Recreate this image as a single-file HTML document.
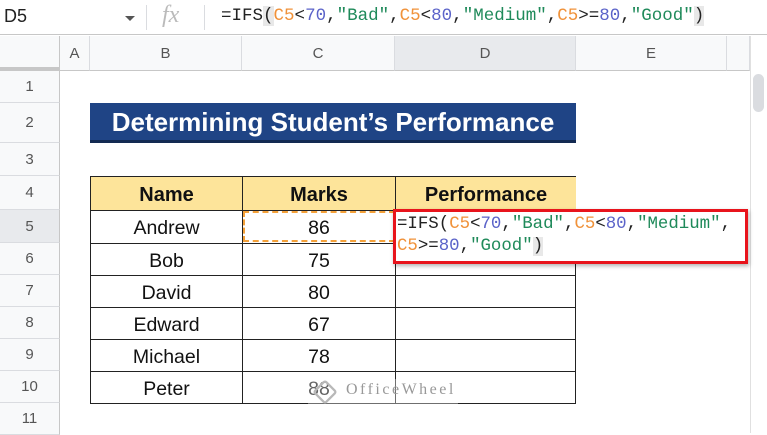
<!DOCTYPE html>
<html><head><style>
*{margin:0;padding:0;box-sizing:border-box}
body{width:767px;height:433px;overflow:hidden;background:#fff;font-family:"Liberation Sans",Arial,sans-serif;position:relative}
.a{position:absolute}
.mono{font-family:"Liberation Mono",monospace}
.r{color:#f0923a}.n{color:#5b63c9}.s{color:#1f8a5a}
.rh{position:absolute;left:0;width:60px;background:#f8f9fa;border-bottom:1px solid #dadce0;border-right:1px solid #c7c7c7;color:#555;font-size:15px;text-align:center}
.ch{position:absolute;top:36px;height:35px;background:#f8f9fa;border-right:1px solid #dadce0;border-bottom:1px solid #c7c7c7;color:#555;font-size:15px;text-align:center;line-height:35px}
.c{position:absolute;border-left:1.5px solid #222;border-top:1.5px solid #222;text-align:center;font-size:19.5px;color:#111}
</style></head><body>
<div class="a" style="left:0;top:0;width:767px;height:35px;border-bottom:1px solid #c7c7c7;background:#fff"></div>
<div class="a" style="left:4px;top:6px;font-size:18px;color:#222">D5</div>
<div class="a" style="left:125px;top:16px;width:0;height:0;border-left:5px solid transparent;border-right:5px solid transparent;border-top:5px solid #555"></div>
<div class="a" style="left:146px;top:5px;width:1px;height:25px;background:#dadce0"></div>
<div class="a" style="left:162px;top:2px;font-size:24px;font-style:italic;color:#bbb;font-family:'Liberation Serif',serif">fx</div>
<div class="a" style="left:204px;top:5px;width:1px;height:25px;background:#dadce0"></div>
<div class="a mono" style="left:221px;top:6px;font-size:17.5px;color:#222;white-space:pre">=IFS<span style="background:#e8e8e8">(</span><span class="r">C5</span>&lt;<span class="n">70</span>,<span class="s">"Bad"</span>,<span class="r">C5</span>&lt;<span class="n">80</span>,<span class="s">"Medium"</span>,<span class="r">C5</span>&gt;=<span class="n">80</span>,<span class="s">"Good"</span><span style="background:#e8e8e8">)</span></div>
<div class="rh" style="top:36px;height:35px;border-bottom:4px solid #c7c7c7"></div>
<div class="ch" style="left:60px;width:30px">A</div>
<div class="ch" style="left:90px;width:152px">B</div>
<div class="ch" style="left:242px;width:153px">C</div>
<div class="ch" style="left:395px;width:181px;background:#e8eaed">D</div>
<div class="ch" style="left:576px;width:151px">E</div>
<div class="ch" style="left:727px;width:23px"></div>
<div class="a" style="left:750px;top:36px;width:17px;height:397px;background:#fff;border-left:1px solid #e0e0e0"></div>
<div class="a" style="left:753px;top:74px;width:11px;height:38px;border-radius:6px;background:#dadce0"></div>
<div class="rh" style="top:71px;height:32px;line-height:32px">1</div>
<div class="rh" style="top:103px;height:40px;line-height:40px">2</div>
<div class="rh" style="top:143px;height:33px;line-height:33px">3</div>
<div class="rh" style="top:176px;height:34px;line-height:34px">4</div>
<div class="rh" style="top:210px;height:33px;line-height:33px;background:#e8eaed">5</div>
<div class="rh" style="top:243px;height:32px;line-height:32px">6</div>
<div class="rh" style="top:275px;height:32px;line-height:32px">7</div>
<div class="rh" style="top:307px;height:32px;line-height:32px">8</div>
<div class="rh" style="top:339px;height:32px;line-height:32px">9</div>
<div class="rh" style="top:371px;height:32px;line-height:32px">10</div>
<div class="rh" style="top:403px;height:32px;line-height:32px">11</div>
<div class="a" style="left:90px;top:103px;width:486px;height:40px;background:#1f4485;border-bottom:3px solid #132a52;color:#fff;font-weight:bold;font-size:26px;text-align:center;line-height:38px;white-space:nowrap">Determining Student’s Performance</div>
<div class="a" style="left:90px;top:176px;width:486px;height:228px;border-right:1.5px solid #222;border-bottom:1.5px solid #222"></div>
<div class="c" style="left:90px;top:176px;width:152px;height:34px;background:#fde49a;font-weight:bold;line-height:36px;font-size:20px">Name</div>
<div class="c" style="left:242px;top:176px;width:153px;height:34px;background:#fde49a;font-weight:bold;line-height:36px;font-size:20px">Marks</div>
<div class="c" style="left:395px;top:176px;width:181px;height:34px;background:#fde49a;font-weight:bold;line-height:36px;font-size:20px">Performance</div>
<div class="c" style="left:90px;top:210px;width:152px;height:33px;line-height:35px">Andrew</div>
<div class="c" style="left:242px;top:210px;width:153px;height:33px;line-height:35px">86</div>
<div class="c" style="left:395px;top:210px;width:181px;height:33px"></div>
<div class="c" style="left:90px;top:243px;width:152px;height:32px;line-height:34px">Bob</div>
<div class="c" style="left:242px;top:243px;width:153px;height:32px;line-height:34px">75</div>
<div class="c" style="left:395px;top:243px;width:181px;height:32px"></div>
<div class="c" style="left:90px;top:275px;width:152px;height:32px;line-height:34px">David</div>
<div class="c" style="left:242px;top:275px;width:153px;height:32px;line-height:34px">80</div>
<div class="c" style="left:395px;top:275px;width:181px;height:32px"></div>
<div class="c" style="left:90px;top:307px;width:152px;height:32px;line-height:34px">Edward</div>
<div class="c" style="left:242px;top:307px;width:153px;height:32px;line-height:34px">67</div>
<div class="c" style="left:395px;top:307px;width:181px;height:32px"></div>
<div class="c" style="left:90px;top:339px;width:152px;height:32px;line-height:34px">Michael</div>
<div class="c" style="left:242px;top:339px;width:153px;height:32px;line-height:34px">78</div>
<div class="c" style="left:395px;top:339px;width:181px;height:32px"></div>
<div class="c" style="left:90px;top:371px;width:152px;height:32px;line-height:34px">Peter</div>
<div class="c" style="left:242px;top:371px;width:153px;height:32px;line-height:34px">88</div>
<div class="c" style="left:395px;top:371px;width:181px;height:32px"></div>
<div class="a" style="left:243px;top:211px;width:152px;height:31px;border:2px dashed #f4a13a"></div>
<div class="a" style="left:308px;top:379px;width:150px;height:26px;background:rgba(255,255,255,0.35)"></div>
<div class="a" style="left:313px;top:380px;width:24px;height:24px;border:3px solid #b8b8b8;border-radius:4px;transform:rotate(45deg) scale(.75)"></div>
<div class="a" style="left:346px;top:381px;font-family:'Liberation Serif',serif;font-size:16px;letter-spacing:2.5px;color:#999">OfficeWheel</div>
<div class="a" style="left:393px;top:209px;width:355px;height:55px;border:3px solid #e8141c;background:#fff;box-shadow:1px 2px 4px rgba(0,0,0,0.3)"></div>
<div class="a mono" style="left:397px;top:214px;font-size:17.4px;line-height:22px;color:#222;white-space:pre">=IFS(<span class="r">C5</span>&lt;<span class="n">70</span>,<span class="s">"Bad"</span>,<span class="r">C5</span>&lt;<span class="n">80</span>,<span class="s">"Medium"</span>,
<span class="r">C5</span>&gt;=<span class="n">80</span>,<span class="s">"Good"</span><span style="background:#e8e8e8">)</span></div>
</body></html>
